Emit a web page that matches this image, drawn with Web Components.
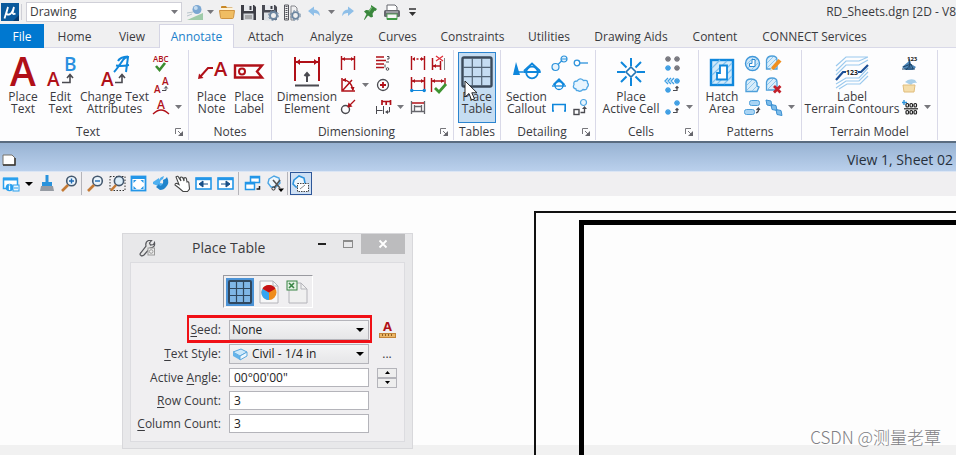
<!DOCTYPE html>
<html lang="en">
<head>
<meta charset="utf-8">
<title>RD_Sheets.dgn</title>
<style>
  html, body { height: 100%; margin: 0; }
  body { font: 12px/16px "Open Sans", "Noto Sans", "Noto Sans CJK SC", sans-serif; color: #3a3a3e; overflow: hidden; }
</style>
</head>
<body>
<cad-app></cad-app>

<script>
const R = '#b01018', B = '#0f87dc', G = '#4a4a50';
const ICONS = {
  mu: [18, 18, `<rect width="18" height="18" fill="#0b5a9c"/><path d="M12 18 18 12v6z" fill="#063a6c"/><path d="M7 4 3.500 15.500M7 4 5.500 9.500Q5.500 12 8 11.500 11 11 13 4M13 4 11.700 9.500Q11.500 12 14.500 10.500" fill="none" stroke="#fff" stroke-width="1.800"/>`],
  model: [18, 18, `<path d="M1 17 17 10v7z" fill="#9fcba9"/><path d="M1 13l5-2M1 10l6-1" stroke="#b8c4cc"/><circle cx="11" cy="6.500" r="4.500" fill="#7ba7d2"/><circle cx="9.800" cy="5" r="2" fill="#c4dcf0"/>`],
  down: [7, 4, `<path d="M0 0h7L3.500 4z" fill="#77777c"/>`],
  downk: [8, 4, `<path d="M0 0h8L4 4z" fill="#000"/>`],
  upk: [5, 3, `<path d="M0 3h5L2.500 0z" fill="#000"/>`],
  downs: [5, 3, `<path d="M0 0h5L2.500 3z" fill="#000"/>`],
  open: [18, 16, `<path d="M3 5V3q0-1 1-1h4l1 1.500h5q1 0 1 1.500v2z" fill="#c98826"/><rect x="3" y="4" width="12" height="4" fill="#fff3d8"/><path d="M1.500 6.500h15l-1 7q-.2 1-1 1h-11q-1 0-1-1z" fill="#f0bd63" stroke="#cf9340"/>`],
  save: [17, 17, `<path d="M1 1h13l2 2v13H1z" fill="#3d3e46"/><rect x="4" y="1" width="9" height="6" fill="#e8eaee"/><rect x="9.500" y="2" width="2" height="4" fill="#3d3e46"/><rect x="3.500" y="9.500" width="10" height="6.500" fill="#d4d7dc"/><path d="M5 12h7M5 14h7" stroke="#777"/>`],
  savegear: [18, 17, `<path d="M1 1h13l2 2v13H1z" fill="#4a4b54"/><rect x="4" y="1" width="9" height="5" fill="#e8eaee"/><rect x="9.500" y="2" width="2" height="3" fill="#3d3e46"/><rect x="3" y="8.500" width="8" height="8" fill="#dfe2e6"/><circle cx="12.500" cy="11.500" r="3.500" fill="#f0f0f0" stroke="#6c86a0" stroke-width="2"/><circle cx="12.500" cy="11.500" r="5" fill="none" stroke="#6c86a0" stroke-dasharray="1.900 2"/>`],
  compress: [18, 17, `<path d="M1.500 1v15h4V1z" fill="#eee" stroke="#55565d"/><path d="M3.500 2v13" stroke="#55565d" stroke-width="2" stroke-dasharray="1 1"/><path d="M8 2h4l2 2v3M8 2v14h3" fill="none" stroke="#85868c"/><circle cx="12.500" cy="11.500" r="3.300" fill="#f0f0f0" stroke="#6c86a0" stroke-width="1.800"/><circle cx="12.500" cy="11.500" r="4.800" fill="none" stroke="#6c86a0" stroke-dasharray="1.900 2"/>`],
  undo: [14, 12, `<path d="M1 5 7 .5v3Q12.500 3.500 13 10 10.500 6.500 7 7v3z" fill="#8fbfe8"/>`],
  redo: [14, 12, `<path d="M13 5 7 .5v3Q1.500 3.500 1 10 3.500 6.500 7 7v3z" fill="#8fbfe8"/>`],
  pin: [15, 17, `<path d="M8 1 14 5l-1.500 2-1-.3-2 3 .5 3-2 .8-3-2L1.500 16 1 15.500 3.500 10 1 7.500l2-1.500 3 .3 2-3z" fill="#39873c"/><path d="M9 3 6 7.500" stroke="#77bb75" stroke-width="1.200"/>`],
  print: [18, 16, `<path d="M4 1h8l2 2v4H4z" fill="#fff" stroke="#66686e"/><rect x="1" y="6" width="16" height="7" rx="1.500" fill="#66686e"/><rect x="4" y="10" width="10" height="5" fill="#f5f5f5" stroke="#58a05c"/><path d="M4 15h10" stroke="#3f9b45" stroke-width="2"/><path d="M3 8h12" stroke="#cfd2d6"/>`],
  more: [7, 8, `<path d="M0 1h7" stroke="#333" stroke-width="1.500"/><path d="M0 4h7L3.500 8z" fill="#333"/>`],
  bigA: [28, 32, `<text x="14" y="30" text-anchor="middle" font-size="39" font-weight="600" fill="${R}">A</text>`],
  edit: [32, 32, `<text x="2" y="30" font-size="19" font-weight="600" fill="${R}">A</text><text x="19" y="15" font-size="19" font-weight="600" fill="#2a90e0">B</text><path d="M17 26.500h8V19M22 22l3-3.500 3 3.500" fill="none" stroke="${G}" stroke-width="1.600"/>`],
  change: [32, 32, `<text x="2" y="30" font-size="19" font-weight="600" fill="${R}">A</text><path d="M15 16Q18 13 24 4 26 1 29 1L27 16M17 9.500q5 1 13-.5M19 5q2-4 10-4.500" fill="none" stroke="${B}" stroke-width="2"/><path d="M16 26.500h7V19M20 22l3-3.500 3 3.500" fill="none" stroke="${G}" stroke-width="1.600"/>`],
  abc: [16, 17, `<text x="0" y="7" font-size="8" font-weight="600" fill="${R}">ABC</text><path d="M3 11 6.500 15 12 8" fill="none" stroke="#3c8c2f" stroke-width="2.600"/>`],
  matchA: [16, 17, `<text x="1" y="16" font-size="10" font-weight="600" fill="${R}">A</text><text x="9" y="8" font-size="10" font-weight="600" fill="${R}">A</text><path d="M9 13.500h4V9.500M11.300 11.500l1.700-2 1.700 2" fill="none" stroke="${G}"/>`],
  arcA: [18, 17, `<text x="9" y="9.500" text-anchor="middle" font-size="12" font-weight="600" fill="${R}">A</text><path d="M1 15Q9 7 17 15" fill="none" stroke="${R}" stroke-width="1.300"/>`],
  note: [32, 32, `<text x="18" y="20" font-size="20" font-weight="600" fill="${R}">A</text><path d="M17 12h-5l-8 9" fill="none" stroke="${R}" stroke-width="2"/><path d="M2 23l1-5.500 4.500 4.500z" fill="${R}"/>`],
  label: [32, 32, `<path d="M2 9.500h27l-5 6 5 6H2z" fill="none" stroke="${R}" stroke-width="2.400"/><circle cx="9" cy="15.500" r="3" fill="none" stroke="${R}" stroke-width="2"/>`],
  dimBig: [32, 32, `<path d="M4 1v24M28 1v24M5 6h22" stroke="${R}" stroke-width="2"/><path d="M5 6l4-3v6zM27 6l-4-3v6z" fill="${R}"/><path d="M4 29.500h24M16 26V17M13.500 20l2.500-3 2.500 3" fill="none" stroke="${G}" stroke-width="2"/>`],
  dim: [16, 16, `<path d="M1.500 1v14M14.500 1v14M2 4h12" stroke="${R}" stroke-width="1.400"/><path d="M2 4l3-2v4zM14 4l-3-2v4z" fill="${R}"/>`],
  dimAng: [16, 16, `<path d="M2 1v13h13M3 13 12 3M3 3q8 0 10 10" fill="none" stroke="${R}" stroke-width="1.500"/><path d="M2 3l4-2v4zM13 14l-2.500-4h4z" fill="${R}"/>`],
  dimRad: [16, 16, `<circle cx="5.500" cy="10.500" r="4" fill="none" stroke="${G}" stroke-width="1.400"/><path d="M15 1 8 8" stroke="${R}" stroke-width="1.300"/><path d="M7.500 8.500l1-5 4 4z" fill="${R}"/>`],
  dimOrd: [16, 16, `<path d="M1 2h8M1 5.500h10M1 9h8M1 12.500h8" stroke="${R}" stroke-width="1.500"/><path d="M12 1.500h2V4h-2M11 7h3M10 9.500v3" fill="none" stroke="${G}"/><circle cx="12.500" cy="14" r="1.300" fill="none" stroke="${G}"/>`],
  dimCtr: [16, 16, `<circle cx="8" cy="8" r="5.500" fill="none" stroke="${G}" stroke-width="1.300"/><path d="M8 5v6M5 8h6" stroke="${R}" stroke-width="1.800"/>`],
  dimMatch: [18, 16, `<path d="M8 1v5M16.500 1v5M8 2.500h9M12.200 3v3" stroke="${R}" stroke-width="1.700"/><path d="M2.500 7v8M2.500 11.500h6M9.500 7v8M15.500 8v5h-3" fill="none" stroke="${G}"/><path d="M11 13l3-2v4z" fill="${G}"/>`],
  dimDash: [16, 16, `<path d="M1.500 1v14M14.500 1v14" stroke="${R}" stroke-width="1.400"/><path d="M3 4h11" stroke="${R}" stroke-dasharray="2 1.500" stroke-width="1.400"/><path d="M2 4l3-2v4zM14 4l-3-2v4z" fill="${R}"/>`],
  dimBlue: [16, 16, `<path d="M1.500 0v13M14.500 0v13M2 4h12" stroke="${R}" stroke-width="1.500"/><path d="M2 4l3-2v4zM14 4l-3-2v4z" fill="${R}"/><path d="M1 13.500h14" stroke="${B}"/><circle cx="1.800" cy="13.500" r="1.700" fill="${B}"/><circle cx="14.200" cy="13.500" r="1.700" fill="${B}"/>`],
  dimGray: [16, 16, `<path d="M1.500 2v13M14.500 2v13M4.500 6v6M11.500 6v6M4.500 7.500h7M2 12.500h12" fill="none" stroke="#66666c" stroke-width="1.300"/><path d="M2 4h12" stroke="${R}" stroke-width="1.500"/>`],
  dimX: [16, 16, `<path d="M1.500 3v12M9.500 6v9M2 11h8" stroke="${R}" stroke-width="1.500"/><path d="M13.500 3v12" stroke="#888"/><path d="M2 11l3-2v4z" fill="${R}"/><path d="M5 1l7 5M12 1 5 6" stroke="#e0303a" stroke-width="1.300"/>`],
  dimOK: [17, 17, `<path d="M1.500 1v14M15 1v7M2 4h12" stroke="${R}" stroke-width="1.400"/><path d="M2 4l3-2v4zM14 4l-3-2v4z" fill="${R}"/><path d="M5 11l4 4 7-8" fill="none" stroke="#3f9432" stroke-width="2.800"/>`],
  table: [32, 32, `<rect x="1.500" y="1.500" width="29" height="29" rx="1.500" fill="#c5ddf2" stroke="#3b4a5a" stroke-width="2.400"/><path d="M11.300 2v28M20.700 2v28M2 11.300h28M2 20.700h28" stroke="#536576" stroke-width="1.200"/>`],
  section: [30, 32, `<path d="M1 19 4 6l4 13z" fill="${B}"/><path d="M4 16h25" stroke="${B}" stroke-width="1.500"/><circle cx="20" cy="16.500" r="5.800" fill="#fff" stroke="${B}" stroke-width="1.800"/><path d="M12 15l8-7.500 8 7.500M12 16h16" fill="none" stroke="${B}" stroke-width="2"/>`],
  detail: [17, 17, `<g fill="#e8f4fd" stroke="#2d93dc" stroke-width="1.200"><circle cx="4.500" cy="12" r="3.500"/><circle cx="13" cy="4" r="3"/><path d="M7 9.500l4-4M10 4h6"/></g>`],
  callout: [16, 16, `<g fill="none" stroke="#2d93dc" stroke-width="1.300"><circle cx="4" cy="8" r="2.800"/><path d="M7 8h8"/></g>`],
  elev: [16, 16, `<path d="M2.500 8 8 2.500 13.500 8" fill="none" stroke="${B}" stroke-width="2"/><circle cx="8" cy="8.500" r="4" fill="none" stroke="${B}" stroke-width="1.300"/><path d="M1 9h14" stroke="${B}" stroke-width="1.300"/>`],
  cloud: [17, 16, `<path d="M4 12Q0 11 2 7.500 1 4 5 4 8 0 11.500 3.500q4.500-1 4 2.500 2 2-.5 4.500 0 3-4 2-3 3-5 1-2 .5-2-1.500z" fill="#e8f5fe" stroke="#4ea6e4" stroke-width="1.300"/>`],
  bracket: [16, 16, `<path d="M3 12H1.800V5.500h12.400V12H13" fill="none" stroke="${B}" stroke-width="1.600"/>`],
  blockto: [17, 17, `<rect x="2" y="10.500" width="5" height="5" fill="none" stroke="${G}" stroke-width="1.400"/><path d="M8.500 13.500h4V9" fill="none" stroke="${G}" stroke-width="1.300"/><path d="M10 10h5L12.500 7z" fill="${G}"/><circle cx="11.500" cy="3.500" r="3" fill="#e8f5fe" stroke="#4ea6e4" stroke-width="1.200"/>`],
  cell: [30, 32, `<g stroke="${B}" stroke-width="2" fill="none"><path d="M15 2v8M15 22v8M1 16h8M21 16h8M5 6l5.500 5.500M19.500 20.500 25 26M25 6l-5.500 5.500M10.500 20.500 5 26"/></g><path d="M15 11 20 16 15 21 10 16z" fill="#fff" stroke="#2474b4" stroke-width="1.600"/>`],
  cells4: [17, 17, `<g fill="none" stroke-width="1.300"><path d="M4 1v6M1 4h6M2 2l4 4M6 2 2 6M13 1v6M10 4h6M11 2l4 4M15 2l-4 4M13 10v6M10 13h6M11 11l4 4M15 11l-4 4" stroke="#77777e"/><path d="M4 10v6M1 13h6M2 11l4 4M6 11l-4 4" stroke="#3f9fe4"/></g>`],
  cells5: [17, 17, `<g fill="none" stroke="#3f9fe4" stroke-width="1.300"><path d="M4 10v6M1 13h6M2 11l4 4M6 11l-4 4M13 1v6M10 4h6M11 2l4 4M15 2l-4 4M7 1 4 4l3 3M4 1 1 4l3 3M10 1 7 4l3 3"/></g><path d="M9 13.500h4V10M11.500 11l1.500-1.500 1.500 1.500" fill="none" stroke="${G}" stroke-width="1.200"/>`],
  cells6: [17, 17, `<g fill="none" stroke="#3f9fe4" stroke-width="1.300"><path d="M4 10v6M1 13h6M2 11l4 4M6 11l-4 4M13 1v6M10 4h6M11 2l4 4M15 2l-4 4"/></g><path d="M9 13.500h4V10M11.500 11l1.500-1.500 1.500 1.500" fill="none" stroke="${G}" stroke-width="1.200"/>`],
  hatch: [26, 32, `<rect x="2" y="4" width="22" height="25" fill="#d2eafa" stroke="${B}" stroke-width="2.400"/><path d="M3 12l8-8M3 19 18 5M3 27 23 7M8 28 23 13M15 28l8-8" stroke="#7fc0ee" stroke-width="1.100"/><path d="M11 9.500h7v14H8V17h3z" fill="#fff" stroke="${B}" stroke-width="1.800"/>`],
  hCircle: [17, 17, `<circle cx="8.500" cy="8.500" r="7" fill="#cde6f8" stroke="#3f97da" stroke-width="1.400"/><path d="M3 9l6-6M4 13 13 4M8 14l6-6" stroke="#8cc4ec"/><path d="M8 4.500h3v7H5.500V8.500H8z" fill="#fff" stroke="#2a88d0"/>`],
  hShape: [17, 17, `<path d="M2 14.500V6q0-4 5-4 7 0 6 7l2 1-2 4.500z" fill="#d9edfa" stroke="#4d9fda" stroke-width="1.400"/><path d="M3 8l5-5M3 13l9-9M8 14l5-5" stroke="#8cc4ec"/>`],
  hSwap: [18, 17, `<rect x="6.500" y="1.500" width="10" height="5" rx="2" fill="#a9d4f4" stroke="#4d9fda"/><rect x="1.500" y="10.500" width="10" height="5" rx="2" fill="#a9d4f4" stroke="#4d9fda"/><path d="M13 14q3-1 2.500-4M13.500 11l2-2 1.500 2" fill="none" stroke="${G}" stroke-width="1.200"/>`],
  hEdit: [17, 17, `<path d="M1.500 14V5q1-4 5.500-4 5 0 5 4v9z" fill="#d9edfa" stroke="#4d9fda" stroke-width="1.300"/><path d="M2 8l6-6M2 13l9-9" stroke="#8cc4ec"/><path d="M5.500 15.500l1-3.500 7-8 3 2.500-7.500 8z" fill="#ef8f1f"/><path d="M5 16l1-3 2 1.800z" fill="#eed"/>`],
  hDel: [17, 17, `<path d="M1.500 13V5q1-4 5.500-4 5 0 5 4v8z" fill="#d9edfa" stroke="#4d9fda" stroke-width="1.300"/><path d="M2 8l6-6M2 13l9-9" stroke="#8cc4ec"/><path d="M9 9l6.500 6.500M15.500 9 9 15.500" stroke="#c2202b" stroke-width="2.800"/>`],
  hLink: [17, 17, `<path d="M1 1l15 14" stroke="#2a7fc0"/><g fill="#7fbdea" stroke="#3b90d2"><path d="M1 1l5 1 1 5-5-1zM6 5.500l5 1 1 5-5-1zM11 10.500l5 1 1 5-5-1z"/></g>`],
  contours: [34, 34, `<g fill="none" stroke="#9ccaee" stroke-width="1.200"><path d="M1 11 11 2h22M1 16 11 6h13l9-4M1 20l10-10h13l9-5M1 29l10-6h13l9-10M1 33l10-7h13l9-9M4 34l8-5h13l8-8"/></g><path d="M1 25l7-8h3M23 17h3l7-7" fill="none" stroke="#1c4f96" stroke-width="2.200"/><text x="17" y="20" text-anchor="middle" font-size="7" font-weight="700" fill="#222">123</text>`],
  tLabel: [17, 17, `<path d="M1 12l6-5 2-3 1 5 5 3-3 3H5z" fill="#4d86b8"/><path d="M2 12l8-3M5 15l5-6M12 14l-2-5M8 4l1 9M1 14h13" stroke="#1f4568"/><text x="6" y="6" font-size="6" font-weight="700" fill="#222">123</text>`],
  tOpen: [17, 17, `<path d="M4 5Q8 1 14 3l2 3q-4-1-6 2z" fill="#a9cfe9"/><path d="M2 8h12l-1 7H3z" fill="#f5deac" stroke="#e0bd7c"/>`],
  tGrid: [17, 17, `<path d="M3 1v5M1 3.500h5" stroke="#2d93dc" stroke-width="1.400"/><g fill="none" stroke="#222" stroke-width="1.200"><rect x="5" y="4.500" width="2.500" height="3.500" rx="1"/><rect x="9" y="4.500" width="2.500" height="3.500" rx="1"/><rect x="13" y="4.500" width="2.500" height="3.500" rx="1"/><rect x="5" y="11.500" width="2.500" height="3.500" rx="1"/><rect x="9" y="11.500" width="2.500" height="3.500" rx="1"/><rect x="13" y="11.500" width="2.500" height="3.500" rx="1"/><path d="M3 9.800h14"/></g>`],
  launch: [8, 8, `<path d="M.5 6V.5H6M3 3l3 3" fill="none" stroke="#77777c"/><path d="M8 3v5H3z" fill="#66666c"/>`],
  sheet: [14, 12, `<path d="M1 1h9l3 3v7H1z" fill="#fff" stroke="#77726a"/><path d="M1 11h12V4" fill="none" stroke="#3b3834" stroke-width="1.500"/>`],
  vInfo: [18, 16, `<rect x="1.500" y="2.500" width="14" height="10" fill="#fff" stroke="#2aa0ee" stroke-width="1.500"/><path d="M1 3h15" stroke="#2aa0ee" stroke-width="3"/><circle cx="7.500" cy="11.500" r="3.800" fill="#2aa0ee"/><path d="M7.500 10v4M7.500 8.500v1" stroke="#fff" stroke-width="1.300"/><rect x="11" y="9" width="6" height="6" fill="#eaf5fd" stroke="#2aa0ee"/><path d="M12 12h4" stroke="#2aa0ee"/>`],
  brush: [16, 17, `<path d="M8 0v8" stroke="#2a93dc" stroke-width="3"/><path d="M3 7h10v4H3z" fill="#2a93dc"/><path d="M2 11h12l1 5H1z" fill="#969ba3"/>`],
  zin: [17, 17, `<circle cx="10.500" cy="6" r="4.800" fill="#eaf4fc" stroke="#44586e" stroke-width="1.600"/><path d="M10.500 3.500v5M8 6h5" stroke="#1e6ab4" stroke-width="1.400"/><path d="M7 10l-6 6" stroke="#c47a35" stroke-width="2.600"/>`],
  zout: [17, 17, `<circle cx="10.500" cy="6" r="4.800" fill="#eaf4fc" stroke="#44586e" stroke-width="1.600"/><path d="M8 6h5" stroke="#1e6ab4" stroke-width="1.400"/><path d="M7 10l-6 6" stroke="#c47a35" stroke-width="2.600"/>`],
  zarea: [17, 17, `<rect x="1" y="1.500" width="15" height="14" fill="none" stroke="#333" stroke-dasharray="1.500 1.500"/><circle cx="10" cy="6" r="4.600" fill="#dceefa" stroke="#44586e" stroke-width="1.600"/><path d="M7 10l-5 5.500" stroke="#c47a35" stroke-width="2.600"/>`],
  fit: [17, 17, `<rect x="1.500" y="1.500" width="14" height="14" fill="#fff" stroke="#2396e8" stroke-width="1.800"/><path d="M1 3h15" stroke="#2396e8" stroke-width="2"/><path d="M3.500 5h3l-3 3zM13.500 5h-3l3 3zM3.500 14h3l-3-3zM13.500 14h-3l3-3z" fill="#2396e8"/>`],
  rotate: [17, 17, `<path d="M1 7 7 3v2q1-3 5-4l-1 3q-3 1-3 4l5 1-4 3-8-3z" fill="#4fb0f0"/><path d="M11 5q3-1 4-3 3 6-1 10-2 3-6 3l-4-3 3-3 1 2q4-1 3-6z" fill="#2184cc"/>`],
  hand: [16, 17, `<path d="M2 2q2-2 3 1l2 3-1-3q1-2 3 0l1 3V3q2-1 2.500 1l.5 3q2-1 2 2l.5 5-2 2.500H9L5 13 1 10q0-2 2-1.500l2 1z" fill="#fff" stroke="#444" stroke-width="1.100"/>`],
  prev: [17, 15, `<rect x="1" y="2" width="15" height="11" fill="#fff" stroke="#2396e8" stroke-width="1.600"/><path d="M1 3h15" stroke="#2396e8" stroke-width="2.400"/><path d="M4 8l4-3v6zM7 8h6" fill="#174e86" stroke="#174e86"/>`],
  next: [17, 15, `<rect x="1" y="2" width="15" height="11" fill="#fff" stroke="#2396e8" stroke-width="1.600"/><path d="M1 3h15" stroke="#2396e8" stroke-width="2.400"/><path d="M13 8 9 5v6zM10 8H4" fill="#174e86" stroke="#174e86"/>`],
  vcopy: [18, 17, `<rect x="6.500" y="1.500" width="9" height="6" fill="#fff" stroke="#2396e8" stroke-width="1.500"/><path d="M6 2.500h10" stroke="#2396e8" stroke-width="2"/><rect x="1.500" y="7.500" width="9" height="7" fill="#fff" stroke="#2396e8" stroke-width="1.500"/><path d="M1 8.500h10" stroke="#2396e8" stroke-width="2"/><path d="M12.500 14h3v-3" fill="none" stroke="#222" stroke-width="1.500"/>`],
  vcut: [18, 18, `<path d="M2 4l5-3 5 2 1 5-4 4H4L1 8z" fill="#eef7fd" stroke="#4ea6e4" stroke-width="1.400"/><path d="M6 5l7 8M13 5l-6 8" stroke="#555" stroke-width="1.600"/><circle cx="6.500" cy="13.500" r="1.600" fill="none" stroke="#333"/><path d="M11 13.500h6L14 17z" fill="#000"/>`],
  vclip: [18, 18, `<path d="M2 5l5-4 5 2 1 5-4 4H4L1 9z" fill="#eef7fd" stroke="#2d93dc" stroke-width="1.600"/><rect x="5.500" y="8.500" width="11" height="8" fill="#fff" stroke="#444" stroke-dasharray="1.500 1"/><path d="M8 14l5-4" stroke="#888"/>`],
  wrench: [17, 18, `<path d="M2 16.500q-2-1 0-3L7 7Q6 3 9.500 1.500l3 0-2 2.500 1 2 3-.5 1-2q1 5-4.500 5.500L5 16q-2 1.500-3 .5z" fill="#e4e4e4" stroke="#56575c" stroke-width="1.200"/><rect x="9" y="9" width="6.500" height="7" fill="#ededed" stroke="#999"/><circle cx="12.200" cy="12.500" r="1.800" fill="none" stroke="#999"/>`],
  minimize: [8, 2, `<rect width="8" height="2" fill="#222"/>`],
  maximize: [10, 8, `<rect x=".5" y="1" width="9" height="6.500" fill="none" stroke="#8c8c8c"/><path d="M0 1h10" stroke="#8c8c8c" stroke-width="2"/>`],
  close: [8, 8, `<path d="M.5.5l7 7M7.500.5l-7 7" stroke="#fff" stroke-width="1.800"/>`],
  grid: [26, 26, `<rect x="2" y="2" width="22" height="22" rx="1" fill="#7fb6e6" stroke="#30475e" stroke-width="2"/><path d="M9.500 2v22M16.500 2v22M2 9.500h22M2 16.500h22" stroke="#30475e" stroke-width="1.200"/>`],
  chart: [20, 24, `<path d="M1 1h13l5 5v17H1z" fill="#f7f7f8" stroke="#b4b4ba"/><path d="M14 1v5h5" fill="none" stroke="#b4b4ba"/><circle cx="10" cy="12.500" r="7.500" fill="#ef8c1c"/><path d="M10 12.500V20A7.500 7.500 0 0 1 3.500 8.700z" fill="#35a5f2"/><path d="M10 12.500 3.500 8.700a7.500 7.500 0 0 1 13 0z" fill="#c40f14"/>`],
  excel: [22, 24, `<path d="M3 3h12l6 6v14H3z" fill="#f0f0f0" stroke="#b4b4ba"/><path d="M15 3v6h6" fill="none" stroke="#b4b4ba"/><rect x="1" y="1" width="10" height="9" fill="#e2f0e2" stroke="#388444"/><path d="M3 3l5 5M8 3 3 8" stroke="#388444" stroke-width="1.600"/>`],
  styleA: [17, 18, `<text x="8.500" y="10" text-anchor="middle" font-size="13" font-weight="700" fill="${R}">A</text><rect x=".5" y="12.500" width="16" height="4" fill="#eab566" stroke="#c2853a"/><path d="M3.500 13v2M6.500 13v2M9.500 13v2M12.500 13v2" stroke="#8f5f23"/>`],
  book: [16, 14, `<path d="M1 5 9 2l6 3-7 4z" fill="#cde9fb" stroke="#5aa7dd"/><path d="M1 5v4l7 4V9z" fill="#63b3ea"/><path d="M8 9v4l7-4V5z" fill="#eef7fd" stroke="#5aa7dd"/>`],
  cursor: [14, 21, `<path d="M1 1v16l4-3.500 2.500 6.500 3-1.200-2.700-6H13z" fill="#fff" stroke="#222"/>`]
};

const BASE = `*{box-sizing:border-box}button{font:inherit;color:inherit;background:none;border:0;padding:0;margin:0;display:flex;align-items:center;justify-content:center}`;

function define(tag, css, html) {
  const template = document.createElement('template');
  customElements.define(tag, class extends HTMLElement {
    connectedCallback() {
      if (this.shadowRoot) return;
      template.innerHTML = `<style>${BASE}${css}</style>${typeof html === 'function' ? html(this) : html}`;
      this.attachShadow({ mode: 'open' }).append(template.content.cloneNode(true));
    }
  });
}

define('ui-icon', `:host{display:block;flex:none}svg{display:block;font-family:"Open Sans","Noto Sans",sans-serif;overflow:visible}`, el => {
  const [w, h, art] = ICONS[el.getAttribute('name')];
  return `<svg width="${w}" height="${h}" viewBox="0 0 ${w} ${h}" aria-hidden="true">${art}</svg>`;
});

define('icon-button', `:host{display:flex}button{flex:1;min-width:0;height:100%}:host([active]) button{background:#cfe0f4;border:1px solid #2e5799}`,
  el => `<button type="button" aria-label="${el.title || el.getAttribute('icon')}"><ui-icon name="${el.getAttribute('icon')}"></ui-icon></button>`);

define('big-tool', `
  :host{display:block;flex:none}
  button{position:relative;flex-direction:column;justify-content:flex-start;width:100%;height:71px;padding-top:2px;gap:2px;border:1px solid transparent;line-height:12px;white-space:nowrap;text-align:center}
  .art{height:34px;display:flex;align-items:center}
  :host([active]) button{background:#c5ddf2;border-color:#2b84cf}
  .over{position:absolute;left:5px;top:27px}`,
  el => `<button type="button"><span class="art"><ui-icon name="${el.getAttribute('icon')}"></ui-icon></span><span><slot></slot></span>
  ${el.hasAttribute('active') ? '<ui-icon class="over" name="cursor"></ui-icon>' : ''}</button>`);

define('tool-column', `:host{display:grid;grid-template-rows:repeat(3,22px);flex:none;align-content:start}`, `<slot></slot>`);

define('ribbon-group', `
  :host{display:flex;flex-direction:column;flex:none;border-right:1px solid #d9d9e8;height:90px}
  .tools{display:flex;height:74px;padding-top:2px}
  footer{position:relative;display:flex;align-items:center;justify-content:center;height:16px;margin-left:-4px;padding-right:12px}
  :host([plain]) footer{padding-right:0}
  button{position:absolute;right:5px;top:4px}`,
  el => `<div class="tools"><slot></slot></div><footer><span>${el.getAttribute('label')}</span>${el.hasAttribute('launcher') ? `<button type="button" aria-label="${el.getAttribute('label')} options"><ui-icon name="launch"></ui-icon></button>` : ''}</footer>`);

define('quick-bar', `
  :host{display:flex;align-items:center;height:24px;padding-left:1px}
  i{width:1px;height:16px;background:#cfcfd6;margin:0 4px 0 2px}
  label{position:relative;display:flex;align-items:center;width:156px}
  select{appearance:none;width:100%;height:20px;border:1px solid #d0d0d8;background:#fff;font:inherit;color:inherit;padding:0 3px;margin:0}
  label ui-icon{position:absolute;right:4px;pointer-events:none}
  nav{display:flex;padding-left:3px;height:22px}
  .file{margin-left:auto;white-space:nowrap;overflow:hidden}`, `
  <ui-icon name="mu"></ui-icon><i></i>
  <label><select aria-label="Workflow"><option>Drawing</option></select><ui-icon name="down"></ui-icon></label>
  <nav aria-label="Quick access">
    <icon-button icon="model" style="width:19px"></icon-button><icon-button icon="down" title="Model list" style="width:12px"></icon-button>
    <icon-button icon="open" style="width:22px"></icon-button><icon-button icon="save" style="width:21px"></icon-button>
    <icon-button icon="savegear" title="Save settings" style="width:22px"></icon-button><icon-button icon="compress" style="width:22px"></icon-button>
    <icon-button icon="undo" style="width:22px"></icon-button><icon-button icon="down" title="Undo list" style="width:12px"></icon-button>
    <icon-button icon="redo" style="width:22px"></icon-button><icon-button icon="pin" style="width:22px"></icon-button>
    <icon-button icon="print" style="width:21px"></icon-button><icon-button icon="more" style="width:20px"></icon-button>
  </nav>
  <span class="file">RD_Sheets.dgn [2D - V8</span>`);

define('ribbon-tab', `
  :host{display:flex;flex:none;height:24px}
  button{flex:1;white-space:nowrap;border:1px solid transparent;border-bottom:0}
  :host([file]) button{background:#0078d0;color:#fff}
  :host([selected]) button{background:#fdfdfe;color:#1b7fca;border-color:#d5d5e4}`, `<button type="button" role="tab"><slot></slot></button>`);

define('ribbon-tabs', `:host{display:flex;height:24px;box-shadow:inset 0 -1px #d9d9e8}`, () =>
  [['File', 44, 'file'], ['Home', 61], ['View', 54], ['Annotate', 75, 'selected'], ['Attach', 64], ['Analyze', 67], ['Curves', 65], ['Constraints', 85], ['Utilities', 68], ['Drawing Aids', 96], ['Content', 72], ['CONNECT Services', 127]]
    .map(([t, w, a = '']) => `<ribbon-tab ${a} style="width:${w}px">${t}</ribbon-tab>`).join(''));

const big = (icon, w, text, extra = '') => `<big-tool icon="${icon}" style="width:${w}px" ${extra}>${text}</big-tool>`;
const col = (w, ...names) => `<tool-column style="width:${w}px">${names.map(n => n ? `<icon-button icon="${n}"></icon-button>` : '<span></span>').join('')}</tool-column>`;
const group = (label, w, body, launcher) => `<ribbon-group label="${label}" ${launcher ? 'launcher' : 'plain'} style="width:${w}px">${body}</ribbon-group>`;

define('ribbon-panel', `
  :host{display:flex;height:95px;padding-top:2px;background:#fdfdfe;border-bottom:2px solid #5a6c80;overflow:hidden}
  ribbon-group{padding-left:4px}`, () =>
  group('Text', 189, big('bigA', 38, 'Place<br>Text') + big('edit', 37, 'Edit<br>Text') + big('change', 71, 'Change Text<br>Attributes') + col(21, 'abc', 'matchA', 'arcA') + col(14, '', '', 'down'), true) +
  group('Notes', 83, big('note', 37, 'Place<br>Note') + big('label', 38, 'Place<br>Label')) +
  group('Dimensioning', 182, big('dimBig', 62, 'Dimension<br>Element') + col(20, 'dim', 'dimAng', 'dimRad') + col(15, '', 'down', '') + col(20, 'dimOrd', 'dimCtr', 'dimMatch') + col(14, '', '', 'down') + col(21, 'dimDash', 'dimBlue', 'dimGray') + col(21, 'dimX', 'dimOK', ''), true) +
  group('Tables', 47, big('table', 38, 'Place<br>Table', 'active')) +
  group('Detailing', 95, big('section', 43, 'Section<br>Callout') + col(22, 'detail', 'elev', 'bracket') + col(21, 'callout', 'cloud', 'blockto'), true) +
  group('Cells', 103, big('cell', 62, 'Place<br>Active Cell') + col(21, 'cells4', 'cells5', 'cells6') + col(13, '', '', 'down'), true) +
  group('Patterns', 103, big('hatch', 38, 'Hatch<br>Area') + col(22, 'hCircle', 'hShape', 'hSwap') + col(21, 'hEdit', 'hDel', 'hLink') + col(14, '', '', 'down')) +
  group('Terrain Model', 136, big('contours', 92, 'Label<br>Terrain Contours') + col(22, 'tLabel', 'tOpen', 'tGrid') + col(14, '', '', 'down')));

define('view-title', `
  :host{display:flex;align-items:center;justify-content:space-between;height:29px;padding:6px 3px 0 2px;background:linear-gradient(#98b3d3,#bad0ec);font-size:14px;color:#26303c;border-bottom:1px solid #dbe5f4;white-space:nowrap}`,
  `<ui-icon name="sheet"></ui-icon><span>View 1, Sheet 02</span>`);

define('view-tools', `
  :host{display:flex;height:24px;background:#f0eff1;padding-bottom:1px}
  .seven{display:grid;grid-template-columns:repeat(7,1fr);width:151px}
  i{width:1px;background:#b4b4ba;margin:0 3px 0 0}`, `
  <icon-button icon="vInfo" title="View attributes" style="width:21px"></icon-button><icon-button icon="downk" title="View attributes list" style="width:15px"></icon-button>
  <icon-button icon="brush" style="width:21px"></icon-button><icon-button icon="zin" title="Zoom in" style="width:24px"></icon-button><i></i>
  <div class="seven"><icon-button icon="zout" title="Zoom out"></icon-button><icon-button icon="zarea" title="Window area"></icon-button><icon-button icon="fit"></icon-button><icon-button icon="rotate"></icon-button><icon-button icon="hand" title="Pan"></icon-button><icon-button icon="prev"></icon-button><icon-button icon="next"></icon-button></div>
  <i style="margin-left:2px"></i><icon-button icon="vcopy" style="width:22px"></icon-button><icon-button icon="vcut" style="width:23px"></icon-button><i style="margin-right:2px"></i>
  <icon-button active icon="vclip" style="width:22px"></icon-button>`);

define('table-dialog', `
  :host{display:block;width:291px;padding:0 7px 6px;background:#e8e8ea;border:1px solid #d8d8db}
  header{position:relative;display:flex;height:28px;align-items:center;gap:36px;padding-left:9px}
  h1{font:14px/20px "Open Sans","Noto Sans",sans-serif;margin:0}
  .win{position:absolute;right:0;top:0;display:flex;height:20px}
  .close{width:44px;background:#bcbcbe}
  main{border:1px solid #dcdce0;background:#f0eff1;padding:12px 10px 8px}
  .kinds{display:flex;gap:2px;width:90px;height:33px;margin:0 auto;padding:2px;border:1px solid #9a9aa0;border-right-color:#fff;border-bottom-color:#fff;position:relative}
  .kinds button{width:26px;height:28px}
  .kinds .on{width:28px;background:#4c93d6}
  form{display:grid;grid-template-columns:80px 140px 20px;grid-template-rows:20px 20px 19px 19px 19px;gap:4px 8px;margin-top:12px;align-items:center;position:relative}
  form>label{justify-self:end;white-space:nowrap}
  u{text-underline-offset:2px}
  input,select{width:100%;height:100%;font:inherit;color:#222;margin:0;border:1px solid #b4b4ba;border-radius:0;background:#fff;padding:0 4px}
  select{appearance:none;background:linear-gradient(#f4f4f5,#e6e6e8);padding:0 2px}
  .pick{position:relative;display:flex;align-items:center;height:20px}
  .pick ui-icon{position:absolute;right:5px;pointer-events:none}
  .pick .lead{right:auto;left:3px}
  .pick .lead~select{padding-left:22px}
  .lead{z-index:1}
  .spin{display:grid;grid-template-rows:1fr 1fr;height:20px}
  .spin button{border:1px solid #b4b4ba;background:#eee}
  .mark{position:absolute;left:46px;top:-5px;width:185px;height:28px;border:2px solid #f01016;border-width:3px 2px;pointer-events:none}`, `
  <header><ui-icon name="wrench"></ui-icon><h1>Place Table</h1><div class="win">
    <button type="button" aria-label="Minimize" style="width:26px"><ui-icon name="minimize"></ui-icon></button>
    <button type="button" aria-label="Maximize" style="width:26px"><ui-icon name="maximize"></ui-icon></button>
    <button type="button" aria-label="Close" class="close"><ui-icon name="close"></ui-icon></button></div></header>
  <main>
    <div class="kinds"><button type="button" class="on" aria-label="Empty table"><ui-icon name="grid"></ui-icon></button><button type="button" aria-label="Report table"><ui-icon name="chart"></ui-icon></button><button type="button" aria-label="Spreadsheet table"><ui-icon name="excel"></ui-icon></button></div>
    <form>
      <label for="seed"><u>S</u>eed:</label><span class="pick"><select id="seed"><option>None</option></select><ui-icon name="downk"></ui-icon></span><icon-button icon="styleA" title="Edit style"></icon-button>
      <label for="style"><u>T</u>ext Style:</label><span class="pick"><ui-icon class="lead" name="book"></ui-icon><select id="style"><option>Civil - 1/4 in</option></select><ui-icon name="downk"></ui-icon></span><button type="button">...</button>
      <label for="angle">Active <u>A</u>ngle:</label><input id="angle" value="00°00'00&quot;"><span class="spin"><button type="button" aria-label="Increase"><ui-icon name="upk"></ui-icon></button><button type="button" aria-label="Decrease"><ui-icon name="downs"></ui-icon></button></span>
      <label for="rows"><u>R</u>ow Count:</label><input id="rows" value="3"><span></span>
      <label for="cols"><u>C</u>olumn Count:</label><input id="cols" value="3"><span></span>
      <div class="mark"></div>
    </form>
  </main>`);

define('sheet-view', `
  :host{display:flex;flex-direction:column;position:relative;background:#fdfdfd;overflow:hidden}
  .foot{margin-top:auto;height:10px;background:#f1f1f1}
  .outer{position:absolute;left:534px;top:15px;right:-2px;bottom:-6px;border:2px solid #111}
  .inner{position:absolute;left:579px;top:24px;right:-6px;bottom:-6px;border:5px solid #000}
  table-dialog{position:absolute;left:122px;top:37px}
  .water{position:absolute;right:15px;bottom:6px;font:300 17px/24px "Noto Sans CJK SC",sans-serif;color:#808084;white-space:nowrap}`, `
  <div class="foot"></div><div class="outer"></div><div class="inner"></div>
  <table-dialog></table-dialog><span class="water">CSDN @测量老覃</span>`);

define('cad-app', `
  :host{display:flex;flex-direction:column;height:100%;background:#f0f0f1}
  sheet-view{flex:1}`, `
  <quick-bar></quick-bar><ribbon-tabs role="tablist"></ribbon-tabs><ribbon-panel></ribbon-panel>
  <view-title></view-title><view-tools></view-tools><sheet-view></sheet-view>`);
</script>
</body>
</html>
